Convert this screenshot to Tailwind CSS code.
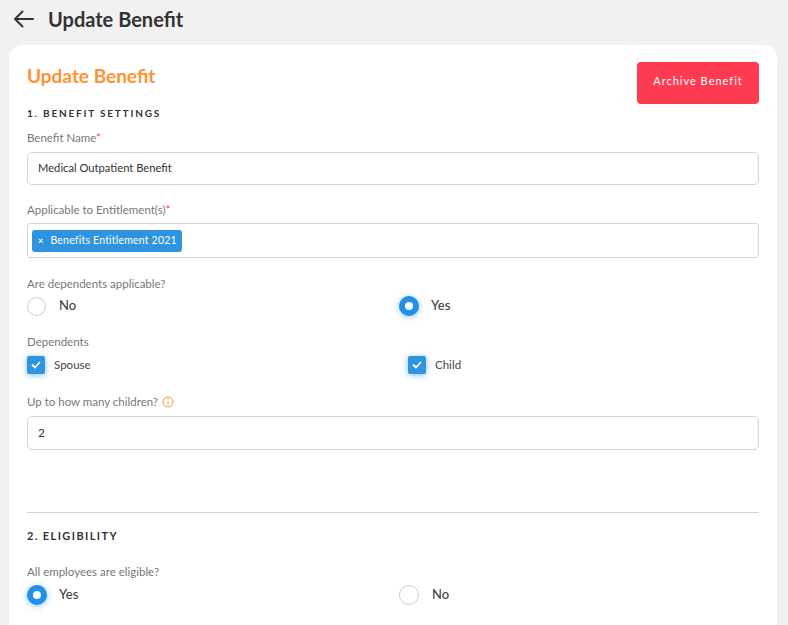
<!DOCTYPE html>
<html>
    <head>
        <meta charset="UTF-8" />
        <meta name="viewport" content="width=device-width, initial-scale=1.0" />
        <title>Update Benefit</title>
        <script src="https://cdn.jsdelivr.net/npm/@tailwindcss/browser@4"></script>
    </head>
    <body class="bg-[#f1f1f1] h-[625px] overflow-hidden font-['Lato',sans-serif] text-[#333]">
        <header class="h-[45px] pl-[13px] flex items-center gap-[14px] pb-[7px]">
            <svg width="21" height="18" viewBox="0 0 21 18" fill="none" stroke="#333" stroke-width="2" stroke-linecap="round" stroke-linejoin="round">
                <path d="M20 9H2M9.500 1.500 2 9l7.500 7.500" />
            </svg>
            <h1 class="text-[20px] leading-6 font-bold">Update Benefit</h1>
        </header>
        <main class="ml-[9px] mr-[11px] bg-white rounded-t-[14px] px-[18px] pt-[17px] h-[580px]">
            <div class="flex justify-between items-start h-[42px]">
                <h2 class="text-[19px] leading-[28px] font-bold text-[#ff9233]">Update Benefit</h2>
                <button class="w-[122px] h-[42px] pb-[3px] bg-[#ff3b52] rounded-[4px] text-white text-[11px] tracking-[1px]">Archive Benefit</button>
            </div>
            <h3 class="mt-[2px] text-[10px] leading-[14px] font-bold tracking-[1.8px]">1. BENEFIT SETTINGS</h3>

            <label class="block mt-[11px] text-[11.5px] leading-[14px] text-[#777]">Benefit Name<span class="text-[#ff3b52]">*</span></label>
            <div class="mt-[7px] h-[33px] border border-[#d3d3da] rounded-[5px] px-[10px] flex items-center text-[11.2px] text-[#333]">Medical Outpatient Benefit</div>

            <label class="block mt-[18px] text-[11.5px] leading-[14px] text-[#777]">Applicable to Entitlement(s)<span class="text-[#ff3b52]">*</span></label>
            <div class="mt-[6px] h-[35px] border border-[#d3d3da] rounded-[3px] px-[4px] flex items-center">
                <span class="h-[22px] w-[150px] bg-[#2f94df] rounded-[3px] flex items-center pl-[6px] gap-[7px] text-white text-[10.5px] tracking-[0.2px]">
                    <span class="text-[9px] font-bold">×</span>Benefits Entitlement 2021
                </span>
            </div>

            <label class="block mt-[19px] text-[11.5px] leading-[14px] text-[#777]">Are dependents applicable?</label>
            <div class="mt-[5px] grid grid-cols-2 h-[19px]">
                <div class="flex items-center gap-[13px] text-[13px] font-medium text-[#444]">
                    <span class="size-[19px] rounded-full border border-[#ccc]"></span>No
                </div>
                <div class="flex items-center gap-[12px] text-[13px] font-medium text-[#444] pl-[6px]">
                    <span class="size-[20px] rounded-full border-[6px] border-[#2090e8] bg-white shadow-[0_1px_6px_rgba(32,144,232,0.5)]"></span>Yes
                </div>
            </div>

            <label class="block mt-[20px] text-[11.5px] leading-[14px] text-[#777]">Dependents</label>
            <div class="mt-[7px] grid grid-cols-2 h-[18px]">
                <div class="flex items-center gap-[9px] text-[11.5px] font-medium text-[#555]">
                    <span class="size-[18px] rounded-[2px] bg-[#2f94df] shadow-[0_1px_6px_rgba(47,148,223,0.6)] flex items-center justify-center">
                        <svg width="10" height="8" viewBox="0 0 10 8" fill="none" stroke="#fff" stroke-width="1.800" stroke-linecap="round" stroke-linejoin="round"><path d="M1.500 4 4 6.500 8.500 1.500" /></svg>
                    </span>Spouse
                </div>
                <div class="flex items-center gap-[9px] text-[11.5px] font-medium text-[#555] pl-[15px]">
                    <span class="size-[18px] rounded-[2px] bg-[#2f94df] shadow-[0_1px_6px_rgba(47,148,223,0.6)] flex items-center justify-center">
                        <svg width="10" height="8" viewBox="0 0 10 8" fill="none" stroke="#fff" stroke-width="1.800" stroke-linecap="round" stroke-linejoin="round"><path d="M1.500 4 4 6.500 8.500 1.500" /></svg>
                    </span>Child
                </div>
            </div>

            <label class="mt-[21px] flex items-center gap-[4px] text-[11.5px] leading-[14px] text-[#777]">
                Up to how many children?
                <svg width="12" height="12" viewBox="0 0 12 12" fill="none" stroke="#f59a32" stroke-width="1"><circle cx="6" cy="6" r="5" /><path d="M6 5.500V9M6 3v1.200" /></svg>
            </label>
            <div class="mt-[7px] h-[34px] border border-[#d3d3da] rounded-[5px] px-[10px] flex items-center text-[12px] text-[#333]">2</div>

            <hr class="mt-[62px] border-[#d3d3da]" />
            <h3 class="mt-[16px] text-[11px] leading-[14px] font-bold tracking-[1.4px]">2. ELIGIBILITY</h3>

            <label class="block mt-[22px] text-[11.5px] leading-[14px] text-[#777]">All employees are eligible?</label>
            <div class="mt-[6px] grid grid-cols-2 h-[20px]">
                <div class="flex items-center gap-[12px] text-[13px] font-medium text-[#444]">
                    <span class="size-[20px] rounded-full border-[6px] border-[#2090e8] bg-white shadow-[0_1px_6px_rgba(32,144,232,0.5)]"></span>Yes
                </div>
                <div class="flex items-center gap-[13px] text-[13px] font-medium text-[#444] pl-[6px]">
                    <span class="size-[20px] rounded-full border border-[#ccc]"></span>No
                </div>
            </div>
        </main>
    </body>
</html>
